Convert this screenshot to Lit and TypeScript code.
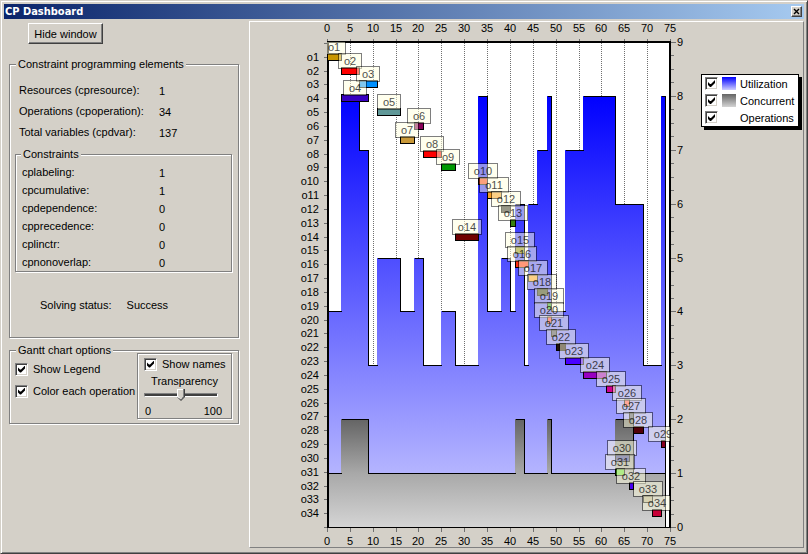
import { LitElement, html, svg, css } from "lit";
import { customElement, property, state } from "lit/decorators.js";
import { classMap } from "lit/directives/class-map.js";

type Step = [from: number, to: number, level: number];
type Operation = [start: number, end: number, color: string];

const UTILIZATION: Step[] = [
  [0, 3, 4], [3, 7, 8], [7, 9, 7], [9, 11, 3], [11, 16, 5], [16, 19, 4],
  [19, 21, 5], [21, 25, 3], [25, 28, 4], [28, 33, 3], [33, 35, 8],
  [35, 38, 4], [38, 40, 5], [40, 41, 4], [41, 43, 6], [43, 44, 3],
  [44, 46, 6], [46, 48, 7], [48, 49, 8], [49, 52, 4], [52, 56, 7],
  [56, 63, 8], [63, 69, 6], [69, 73, 3], [73, 74, 8],
];

const CONCURRENT: Step[] = [
  [0, 3, 1], [3, 9, 2], [9, 41, 1], [41, 43, 2], [43, 48, 1],
  [48, 49, 2], [49, 63, 1], [63, 67, 2], [67, 74, 1],
];

const OPERATIONS: Operation[] = [
  [0, 3, "#c89600"], [3, 7, "#ff0000"], [7, 11, "#0090ff"], [3, 9, "#3800c0"],
  [11, 16, "#609898"], [19, 21, "#880058"], [16, 19, "#c89838"], [21, 25, "#ff0000"],
  [25, 28, "#009800"], [33, 35, "#f84018"], [35, 38, "#f8a028"], [38, 40, "#303030"],
  [40, 41, "#388010"], [28, 33, "#700000"], [41, 43, "#909010"], [41, 44, "#ff3010"],
  [44, 46, "#f8a028"], [46, 48, "#303818"], [48, 49, "#20a820"], [48, 49, "#ff3838"],
  [49, 50, "#484860"], [50, 52, "#201008"], [52, 56, "#4800ff"], [56, 61, "#9800c0"],
  [61, 63, "#d00090"], [65, 66, "#ff5050"], [66, 67, "#505070"], [67, 69, "#500008"],
  [73, 74, "#880020"], [63, 66, "#383890"], [63, 65, "#60d830"], [66, 67, "#4800f0"],
  [69, 71, "#b0a888"], [71, 73, "#c80038"],
];

const PLOT = { left: 77, right: 420, top: 20, bottom: 505 };
const MAX_TIME = 75;
const MAX_LEVEL = 9;

const xAt = (t: number) =>
  Math.round(PLOT.left + (t * (PLOT.right - PLOT.left)) / MAX_TIME);
const yAt = (level: number) =>
  Math.round(PLOT.bottom - (level * (PLOT.bottom - PLOT.top)) / MAX_LEVEL);
const rowAt = (n: number) =>
  Math.round(PLOT.top + 1 + (n * (PLOT.bottom - PLOT.top - 1)) / 35);

/** Closed outline of a stepped area standing on the time axis. */
function areaPath(steps: Step[]): string {
  const tops = steps.map(([a, b, v]) => `L${xAt(a)} ${yAt(v)}L${xAt(b)} ${yAt(v)}`);
  const end = steps[steps.length - 1][1];
  return `M${xAt(0)} ${yAt(0)}${tops.join("")}L${xAt(end)} ${yAt(0)}Z`;
}

/** Tops and falling edges of a stepped area. */
function edgePath(steps: Step[]): string {
  return steps
    .map(([a, b, v], i) => {
      const next = steps[i + 1]?.[2] ?? 0;
      const drop = next < v ? `V${yAt(next)}` : "";
      return `M${xAt(a)} ${yAt(v)}H${xAt(b)}${drop}`;
    })
    .join("");
}

@customElement("gantt-chart")
class GanttChart extends LitElement {
  @property({ type: Boolean }) utilization = true;
  @property({ type: Boolean }) concurrent = true;
  @property({ type: Boolean }) operations = true;
  @property({ type: Boolean }) names = true;
  @property({ type: Boolean }) colored = true;
  @property({ type: Number }) transparency = 50;

  static styles = css`
    :host { display: block; min-width: 0; }
    .chart { display: block; width: 100%; height: 100%; }
    text { font: 11px "Liberation Sans", Arial, sans-serif; fill: #000; }
    .mid { text-anchor: middle; }
    .end { text-anchor: end; }
    .plot { fill: #fff; }
    .grid { stroke: #707070; stroke-dasharray: 1 1; fill: none; }
    .tick { stroke: #707070; fill: none; }
    .edge { stroke: #000; fill: none; }
    .frame { stroke: #000; stroke-width: 2; fill: none; }
    .bar { stroke: #000; }
    .tag { fill: #ffffdf; stroke: #000; }
  `;

  render() {
    const times = Array.from({ length: 16 }, (_, i) => i * 5);
    const levels = Array.from({ length: 10 }, (_, i) => i);
    const quarters = Array.from({ length: 37 }, (_, i) => i / 4);
    const { left, right, top, bottom } = PLOT;
    const tagOpacity = 1 - this.transparency / 100;
    return html`
      <svg class="chart" viewBox="0 0 446 525" preserveAspectRatio="xMidYMin meet"
        role="img" aria-label="Gantt chart" shape-rendering="crispEdges">
        <defs>
          <linearGradient id="blue" gradientUnits="userSpaceOnUse" x1="0" y1=${yAt(8)} x2="0" y2=${bottom}>
            <stop offset="0" stop-color="#0000ff"></stop>
            <stop offset="1" stop-color="#ceceff"></stop>
          </linearGradient>
          <linearGradient id="gray" gradientUnits="userSpaceOnUse" x1="0" y1=${yAt(2)} x2="0" y2=${bottom}>
            <stop offset="0" stop-color="#646464"></stop>
            <stop offset="0.5" stop-color="#a8a8a8"></stop>
            <stop offset="1" stop-color="#d4d4d4"></stop>
          </linearGradient>
          <clipPath id="inside">
            <rect x=${left} y=${top} width=${right - left} height=${bottom - top + 1}></rect>
          </clipPath>
        </defs>
        <rect class="plot" x=${left} y=${top} width=${right - left} height=${bottom - top}></rect>
        <g transform="translate(0.5 0.5)">
          ${times.slice(1, -1).map((t) => svg`<path class="grid" d="M${xAt(t)} ${top}V${bottom}"></path>`)}
          ${times.map((t) => svg`<path class="tick" d="M${xAt(t)} ${top - 4}V${top}M${xAt(t)} ${bottom}V${bottom + 4}"></path>`)}
          ${Array.from({ length: 36 }, (_, n) => svg`<path class="tick" d="M${left - 4} ${rowAt(n)}H${left}"></path>`)}
          ${quarters.map((q) => svg`<path class="tick" d="M${right} ${yAt(q)}h${q % 1 ? 3 : 5}"></path>`)}
        </g>
        ${this.utilization ? svg`
          <path fill="url(#blue)" d=${areaPath(UTILIZATION)}></path>
          <path class="edge" transform="translate(0.5 0.5)" d=${edgePath(UTILIZATION)}></path>` : null}
        ${this.concurrent ? svg`
          <path fill="url(#gray)" d=${areaPath(CONCURRENT)}></path>
          <path class="edge" transform="translate(0.5 0.5)" d=${edgePath(CONCURRENT)}></path>` : null}
        <path class="edge" transform="translate(0.5 0.5)" d="M${left} ${bottom}H${right}"></path>
        <path class="frame" d="M${left + 1} ${bottom + 1}V${top}H${right}V${bottom + 1}"></path>
        ${this.operations ? svg`<g clip-path="url(#inside)">${OPERATIONS.map((op, i) => this.operation(op, i + 1, tagOpacity))}</g>` : null}
        ${times.map((t) => svg`
          <text class="mid" x=${xAt(t)} y=${top - 10}>${t}</text>
          <text class="mid" x=${xAt(t)} y=${bottom + 18}>${t}</text>`)}
        ${OPERATIONS.map((_, i) => svg`<text class="end" x=${left - 8} y=${rowAt(i + 1) + 4}>o${i + 1}</text>`)}
        ${levels.map((v) => svg`<text x=${right + 7} y=${yAt(v) + 4}>${v}</text>`)}
      </svg>
    `;
  }

  private operation([start, end, color]: Operation, n: number, opacity: number) {
    const x = xAt(start);
    const width = xAt(end) - x;
    const y = rowAt(n);
    const center = x + Math.round(width / 2);
    const tagWidth = n < 10 ? 24 : 30;
    return svg`
      <rect class="bar" transform="translate(0.5 0.5)" x=${x} y=${y - 4} width=${width} height="7"
        fill=${this.colored ? color : "#ff0000"}></rect>
      ${this.names ? svg`
        <rect class="tag" opacity=${opacity} transform="translate(0.5 0.5)" x=${center - tagWidth / 2}
          y=${y - 18} width=${tagWidth - 1} height="15"></rect>
        <text class="mid" opacity=${Math.min(1, opacity * 1.4)} x=${center} y=${y - 6}>o${n}</text>
      ` : null}
    `;
  }
}

@customElement("app-root")
class AppRoot extends LitElement {
  @state() private showLegend = true;
  @state() private colored = true;
  @state() private names = true;
  @state() private transparency = 50;
  @state() private series = [true, true, true];

  static styles = css`
    :host {
      display: block;
      font: 11px/14px "Liberation Sans", Arial, sans-serif;
      color: #000;
      --face: #d4d0c8;
    }
    * { box-sizing: border-box; }
    .window {
      display: flex;
      flex-direction: column;
      min-height: 100vh;
      padding: 3px 3px 5px;
      background: var(--face);
      border: 1px solid;
      border-color: #d4d0c8 #404040 #404040 #d4d0c8;
      box-shadow: inset 1px 1px #fff, inset -1px -1px #808080;
    }
    .titlebar {
      display: flex;
      align-items: center;
      justify-content: space-between;
      height: 15px;
      padding: 0 2px 0 1px;
      background: linear-gradient(90deg, #0a246a, #a6caf0);
    }
    .title {
      margin: 0;
      color: #fff;
      font: bold 11px/15px "DejaVu Sans Condensed", "DejaVu Sans", sans-serif;
    }
    .close, .hide {
      padding: 0;
      background: var(--face);
      border: 1px solid;
      border-color: #fff #404040 #404040 #fff;
      box-shadow: inset -1px -1px #808080;
      font: inherit;
      color: inherit;
    }
    .close { display: grid; place-items: center; width: 11px; height: 11px; }
    .hide { display: block; width: 75px; height: 21px; margin-left: 19px; }
    .client { display: flex; flex: 1; padding-top: 2px; }
    .side { flex: none; width: 245px; padding: 2px 10px 0 5px; }
    .group, .names {
      min-width: 0;
      margin: 0;
      border: 1px solid #808080;
      box-shadow: 1px 1px #fff, inset 1px 1px #fff;
    }
    .caption { padding: 0 2px; background: var(--face); }
    .elements { margin-top: 13px; padding: 9px 6px 25px 5px; }
    .elements > .caption, .options > .caption { margin-left: 1px; }
    .rows { margin: 0; }
    .row { display: grid; grid-template-columns: 140px 1fr; line-height: 21px; padding-left: 4px; }
    .row dd { margin: 0; padding-top: 1px; }
    .row dt, .row dd { height: 21px; }
    .constraints { margin-top: 4px; padding: 2px 6px 0; }
    .constraints .caption { margin-left: -1px; }
    .constraints .row { grid-template-columns: 137px 1fr; line-height: 18px; padding-left: 0; }
    .constraints .row dt, .constraints .row dd { height: 18px; }
    .status { display: flex; gap: 15px; margin: 26px 0 0 25px; }
    .options {
      display: flex;
      justify-content: space-between;
      align-items: flex-start;
      margin-top: 5px;
      padding: 0 6px 4px 5px;
    }
    .checks { display: flex; flex-direction: column; gap: 8px; padding-top: 5px; }
    .check { display: flex; align-items: center; gap: 5px; white-space: nowrap; }
    .names { width: 95px; margin-top: -4px; padding: 3px 6px 0; }
    .transparency { display: block; text-align: center; margin-top: 3px; }
    .scale { display: flex; justify-content: space-between; padding: 2px 3px 0 1px; }
    input[type="checkbox"] {
      appearance: none;
      flex: none;
      width: 13px;
      height: 13px;
      margin: 0;
      padding: 2px;
      background: #fff;
      border: 1px solid;
      border-color: #808080 #fff #fff #808080;
      box-shadow: inset 1px 1px #404040, inset -1px -1px #d4d0c8;
    }
    input[type="checkbox"]:checked::before {
      content: "";
      display: block;
      width: 7px;
      height: 7px;
      background: #000;
      clip-path: polygon(0 2px, 2px 4px, 3px 4px, 7px 0, 7px 3px, 3px 7px, 2px 7px, 0 5px);
    }
    .slider {
      appearance: none;
      display: block;
      width: 74px;
      height: 14px;
      margin: 0;
      background: transparent;
    }
    .slider::-webkit-slider-runnable-track {
      height: 4px;
      background: #404040;
      border: 1px solid;
      border-color: #808080 #fff #fff #808080;
    }
    .slider::-webkit-slider-thumb {
      appearance: none;
      width: 8px;
      height: 12px;
      margin-top: -5px;
      background: url("data:image/svg+xml,%3Csvg xmlns='http://www.w3.org/2000/svg' width='8' height='12'%3E%3Cpath d='M0 0H8V8L4 12L0 8Z' fill='%23404040'/%3E%3Cpath d='M0 0H7V8L4 11L0 8Z' fill='%23808080'/%3E%3Cpath d='M0 0H6V7L4 10L0 8Z' fill='%23fff'/%3E%3Cpath d='M1 1H6V7L4 10L1 7Z' fill='%23d4d0c8'/%3E%3C/svg%3E") no-repeat;
    }
    .panel {
      display: flex;
      flex: 1;
      min-width: 0;
      gap: 5px;
      padding-right: 4px;
      border: 1px solid;
      border-color: #fff #808080 #808080 #fff;
    }
    gantt-chart { flex: 1; }
    .legend {
      display: flex;
      flex-direction: column;
      flex: none;
      align-self: flex-start;
      width: 98px;
      margin-top: 52px;
      padding: 0 3px;
      background: #fff;
      border: 1px solid #000;
      box-shadow: 3px 3px #000;
    }
    .legend .check { height: 17px; gap: 4px; }
    .swatch { width: 14px; height: 13px; }
    .swatch.blue { background: linear-gradient(#0000ff, #ceceff); }
    .swatch.gray { background: linear-gradient(#646464, #d4d4d4); }
  `;

  private check(label: string, checked: boolean, set: (on: boolean) => void, swatch?: string) {
    return html`
      <label class="check">
        <input type="checkbox" .checked=${checked}
          @change=${(e: Event) => set((e.target as HTMLInputElement).checked)}>
        ${swatch === undefined ? null
          : html`<span class=${classMap({ swatch: true, [swatch]: true })}></span>`}
        <span>${label}</span>
      </label>
    `;
  }

  private rows(items: [string, number][]) {
    return html`
      <dl class="rows">
        ${items.map(([name, value]) => html`
          <div class="row"><dt>${name}:</dt><dd>${value}</dd></div>`)}
      </dl>
    `;
  }

  private toggleSeries(index: number, on: boolean) {
    this.series = this.series.map((v, i) => (i === index ? on : v));
  }

  render() {
    return html`
      <main class="window">
        <header class="titlebar">
          <h1 class="title">CP Dashboard</h1>
          <button class="close" aria-label="Close">
            <svg width="7" height="7" viewBox="0 0 7 7" aria-hidden="true">
              <path d="M1 1L6 6M6 1L1 6" stroke="#000" stroke-width="1.4"></path>
            </svg>
          </button>
        </header>
        <div class="client">
          <section class="side">
            <button class="hide">Hide window</button>
            <fieldset class="group elements">
              <legend class="caption">Constraint programming elements</legend>
              ${this.rows([
                ["Resources (cpresource)", 1],
                ["Operations (cpoperation)", 34],
                ["Total variables (cpdvar)", 137],
              ])}
              <fieldset class="group constraints">
                <legend class="caption">Constraints</legend>
                ${this.rows([
                  ["cplabeling", 1],
                  ["cpcumulative", 1],
                  ["cpdependence", 0],
                  ["cpprecedence", 0],
                  ["cplinctr", 0],
                  ["cpnonoverlap", 0],
                ])}
              </fieldset>
              <div class="status"><span>Solving status:</span><span>Success</span></div>
            </fieldset>
            <fieldset class="group options">
              <legend class="caption">Gantt chart options</legend>
              <div class="checks">
                ${this.check("Show Legend", this.showLegend, (on) => (this.showLegend = on))}
                ${this.check("Color each operation", this.colored, (on) => (this.colored = on))}
              </div>
              <div class="names">
                ${this.check("Show names", this.names, (on) => (this.names = on))}
                <label class="transparency" for="transparency">Transparency</label>
                <input class="slider" id="transparency" type="range" min="0" max="100"
                  .value=${String(this.transparency)}
                  @input=${(e: Event) => (this.transparency = Number((e.target as HTMLInputElement).value))}>
                <div class="scale"><span>0</span><span>100</span></div>
              </div>
            </fieldset>
          </section>
          <section class="panel">
            <gantt-chart
              .utilization=${this.series[0]}
              .concurrent=${this.series[1]}
              .operations=${this.series[2]}
              .names=${this.names}
              .colored=${this.colored}
              .transparency=${this.transparency}></gantt-chart>
            ${this.showLegend ? html`
              <div class="legend">
                ${this.check("Utilization", this.series[0], (on) => this.toggleSeries(0, on), "blue")}
                ${this.check("Concurrent", this.series[1], (on) => this.toggleSeries(1, on), "gray")}
                ${this.check("Operations", this.series[2], (on) => this.toggleSeries(2, on), "empty")}
              </div>` : null}
          </section>
        </div>
      </main>
    `;
  }
}
